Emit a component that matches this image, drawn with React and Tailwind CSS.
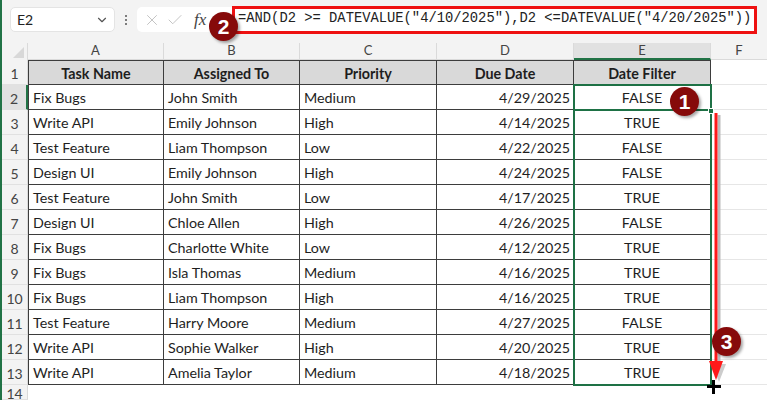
import { ChevronDown, X, Check } from "lucide-react";

const rows = [
  ["Fix Bugs", "John Smith", "Medium", "4/29/2025", "FALSE"],
  ["Write API", "Emily Johnson", "High", "4/14/2025", "TRUE"],
  ["Test Feature", "Liam Thompson", "Low", "4/22/2025", "FALSE"],
  ["Design UI", "Emily Johnson", "High", "4/24/2025", "FALSE"],
  ["Test Feature", "John Smith", "Low", "4/17/2025", "TRUE"],
  ["Design UI", "Chloe Allen", "High", "4/26/2025", "FALSE"],
  ["Fix Bugs", "Charlotte White", "Low", "4/12/2025", "TRUE"],
  ["Fix Bugs", "Isla Thomas", "Medium", "4/16/2025", "TRUE"],
  ["Fix Bugs", "Liam Thompson", "High", "4/16/2025", "TRUE"],
  ["Test Feature", "Harry Moore", "Medium", "4/27/2025", "FALSE"],
  ["Write API", "Sophie Walker", "High", "4/20/2025", "TRUE"],
  ["Write API", "Amelia Taylor", "Medium", "4/18/2025", "TRUE"],
];

const headers = ["Task Name", "Assigned To", "Priority", "Due Date", "Date Filter"];
const widths = ["w-[136px]", "w-[136px]", "w-[137px]", "w-[137px]", "w-[137px]"];
const letters = ["A", "B", "C", "D", "E"];

// numbered marker used for the tutorial callouts
const Badge = ({ n, className }) => (
  <div
    className={`absolute w-[29px] h-[29px] rounded-full bg-[#860a0a] text-white font-bold text-[21px] leading-none flex items-center justify-center shadow-[2px_2px_3px_rgba(0,0,0,0.35)] font-['Liberation_Sans',sans-serif] ${className}`}
  >
    {n}
  </div>
);

const RowHeader = ({ children, active }) => (
  <div
    className={`w-[26px] shrink-0 flex items-center justify-center pt-[3px] text-[14px] text-[#444] border-b border-[#e1e1e1] ${
      active ? "bg-[#e1e1e1] border-r-2 border-r-[#217346]" : "bg-[#f3f3f3] border-r border-r-[#dadada]"
    }`}
  >
    {children}
  </div>
);

const Cell = ({ i, children, header }) => {
  let align = "justify-start pl-[4px]";
  if (header || i === 4) align = "justify-center";
  else if (i === 3) align = "justify-end pr-[3px]";
  return (
    <div
      className={`${widths[i]} shrink-0 flex items-center pt-[2px] border-r border-b border-[#3d3d3d] ${
        i === 0 ? "border-l" : ""
      } ${header ? "bg-[#d9d9d9] font-bold border-t" : "bg-white"} ${align} text-[14.3px] text-[#1e1e1e] whitespace-nowrap overflow-hidden`}
    >
      {children}
    </div>
  );
};

export default function App() {
  return (
    <div className="w-[767px] h-[400px] overflow-hidden bg-white flex relative font-['Lato',sans-serif]">
      <div className="w-[2px] shrink-0 bg-[#217346]" />
      <div className="flex-1 flex flex-col">
        {/* formula bar */}
        <div className="h-[43px] shrink-0 bg-[#f3f3f3] flex items-center pl-[8px] pb-[4px]">
          <div className="w-[105px] h-[25px] bg-white rounded-[5px] border border-[#e4e4e4] flex items-center justify-between pl-[6px] pr-[5px] text-[14px] text-[#222]">
            E2
            <ChevronDown size={14} strokeWidth={2} className="text-[#555]" />
          </div>
          <div className="w-[22px] flex flex-col items-center gap-[2px]">
            <span className="w-[2px] h-[2px] bg-[#555] rounded-full" />
            <span className="w-[2px] h-[2px] bg-[#555] rounded-full" />
            <span className="w-[2px] h-[2px] bg-[#555] rounded-full" />
          </div>
          <div className="w-[100px] h-[25px] bg-white rounded-l-[5px] flex items-center pl-[6px] gap-[5px] text-[#bdbdbd]">
            <X size={18} strokeWidth={1.2} />
            <Check size={18} strokeWidth={1.2} />
            <span className="ml-[5px] text-[#444] italic text-[17px] font-['Liberation_Serif',serif]">fx</span>
          </div>
          <div className="w-[525px] h-[28px] -ml-[5px] bg-white border-[3px] border-[#ee1111] flex items-center pl-[3px] text-[13.8px] text-[#222] font-['Liberation_Mono',monospace] whitespace-nowrap">
            =AND(D2 &gt;= DATEVALUE("4/10/2025"),D2 &lt;=DATEVALUE("4/20/2025"))
          </div>
        </div>

        {/* column letters */}
        <div className="h-[17px] shrink-0 flex text-[13px] text-[#444]">
          <div className="w-[26px] shrink-0 bg-[#f3f3f3] border-r border-[#dadada] relative">
            <div className="absolute right-[3px] bottom-[2px] w-0 h-0 border-l-[11px] border-l-transparent border-b-[11px] border-b-[#d8d8d8]" />
          </div>
          {letters.map((l, i) => (
            <div
              key={l}
              className={`${widths[i]} shrink-0 flex items-center justify-center border-r border-[#dadada] ${
                l === "E" ? "bg-[#e1e1e1] border-b-2 border-b-[#217346]" : "bg-[#f3f3f3] border-b border-b-[#dadada]"
              }`}
            >
              {l}
            </div>
          ))}
          <div className="flex-1 flex items-center justify-center bg-[#f3f3f3] border-b border-[#dadada]">F</div>
        </div>

        {/* header row */}
        <div className="h-[25px] shrink-0 flex">
          <RowHeader>1</RowHeader>
          {headers.map((h, i) => (
            <Cell key={h} i={i} header>
              {h}
            </Cell>
          ))}
          <div className="flex-1 border-b border-[#e6e6e6]" />
        </div>

        {rows.map((r, ri) => (
          <div key={ri} className="h-[25px] shrink-0 flex">
            <RowHeader active={ri === 0}>{ri + 2}</RowHeader>
            {r.map((v, i) => (
              <Cell key={i} i={i}>
                {v}
              </Cell>
            ))}
            <div className="flex-1 border-b border-[#e6e6e6]" />
          </div>
        ))}

        <div className="h-[15px] shrink-0 flex">
          <RowHeader>14</RowHeader>
          <div className="flex-1" />
        </div>
      </div>

      {/* selection E2:E13 */}
      <div className="absolute left-[573px] top-[84px] w-[139px] h-[302px] border-2 border-[#1e7145]" />
      <div className="absolute left-[573px] top-[109px] w-[139px] h-[2px] bg-[#1e7145]" />
      <div className="absolute left-[708px] top-[108px] w-[6px] h-[6px] bg-[#1e7145] border border-white" />

      {/* drag arrow */}
      <svg className="absolute left-[708px] top-[112px]" width="20" height="275" viewBox="0 0 20 275">
        <line x1="11" y1="3" x2="11" y2="253" stroke="#bbbbbb" strokeWidth="3" />
        <path d="M4 252 L18 252 L11 270 Z" fill="#cccccc" />
        <line x1="8" y1="1" x2="8" y2="250" stroke="#ff1a1a" strokeWidth="3" />
        <path d="M1 249 L15 249 L8 268 Z" fill="#ff1a1a" />
      </svg>

      {/* fill cursor */}
      <div className="absolute left-[707px] top-[380px] w-[14px] h-[14px]">
        <div className="absolute left-[5px] top-0 w-[3px] h-[14px] bg-black" />
        <div className="absolute left-0 top-[5px] w-[14px] h-[3px] bg-black" />
      </div>

      <Badge n="1" className="left-[670px] top-[87px]" />
      <Badge n="2" className="left-[209px] top-[12px]" />
      <Badge n="3" className="left-[712px] top-[327px]" />
    </div>
  );
}
